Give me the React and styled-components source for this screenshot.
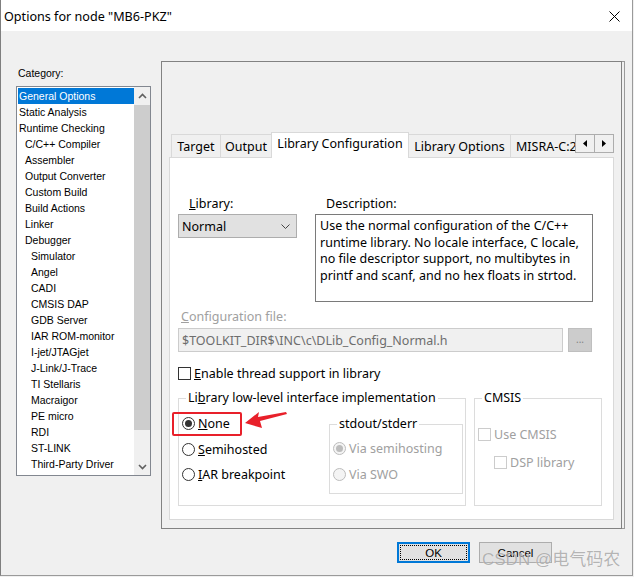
import React from 'react';
import styled, { createGlobalStyle } from 'styled-components';

const Global = createGlobalStyle`
  html, body { margin: 0; padding: 0; background: #f0f0f0; }
  body { width: 634px; height: 577px; overflow: hidden; font-family: "Noto Sans", "Liberation Sans", sans-serif; color: #000; }
  * { box-sizing: border-box; }
`;

const Window = styled.div`
  position: relative;
  width: 633px;
  height: 576px;
  border-left: 1px solid #7f7f7f;
  border-right: 1px solid #9a9a9a;
  border-bottom: 1px solid #9a9a9a;
  background: #f0f0f0;
  display: flex;
  flex-direction: column;
`;

const TitleBar = styled.div`
  height: 31px;
  background: #fff;
  display: flex;
  align-items: center;
  justify-content: space-between;
  padding: 1px 12px 0 3px;
`;

const Title = styled.div`
  font-family: "Noto Sans", sans-serif;
  font-size: 12.6px;
  color: #000;
`;

const Body = styled.div`
  display: flex;
  padding: 30px 0 0 15px;
`;

const LeftCol = styled.div`
  width: 135px;
  padding-top: 4px;
  display: flex;
  flex-direction: column;
`;

const SmallText = styled.div`
  font-family: "Liberation Sans", Arial, sans-serif;
  font-size: 10.5px;
  line-height: 16px;
`;

const CategoryLabel = styled(SmallText)`
  padding-left: 2px;
`;

const ListBox = styled.div`
  margin-top: 5px;
  height: 390px;
  width: 135px;
  border: 1px solid #828790;
  background: #fff;
  display: flex;
`;

const Items = styled.div`
  flex: 1;
  padding: 1px 0 0 1px;
  overflow: hidden;
`;

const Item = styled(SmallText)`
  height: 16px;
  white-space: nowrap;
  padding-left: ${p => 1 + p.$level * 6}px;
  background: ${p => (p.$selected ? '#0078d7' : 'transparent')};
  color: ${p => (p.$selected ? '#fff' : '#000')};
`;

const VScroll = styled.div`
  width: 16px;
  background: #f0f0f0;
  display: flex;
  flex-direction: column;
`;

const ScrollArrow = styled.div`
  height: 17px;
  display: flex;
  align-items: center;
  justify-content: center;
`;

const Thumb = styled.div`
  margin-top: 1px;
  height: 325px;
  background: #cdcdcd;
`;

const Track = styled.div`
  flex: 1;
`;

const Frame = styled.div`
  margin-left: 10px;
  width: 461px;
  height: 468px;
  border: 1px solid #828282;
  box-shadow: 3px 0 0 -1px #f0f0f0, 3px 0 0 0 #9a9a9a;
  padding: 70px 7px 7px 7px;
  display: flex;
  flex-direction: column;
`;

const TabStrip = styled.div`
  height: 26px;
  display: flex;
  padding-left: 2px;
`;

const TabList = styled.div`
  width: 404px;
  height: 26px;
  display: flex;
  align-items: flex-end;
  overflow: hidden;
`;

const Tab = styled.div`
  flex: none;
  width: ${p => p.$w}px;
  height: ${p => (p.$active ? 26 : 24)}px;
  line-height: ${p => (p.$active ? 22 : 23)}px;
  margin-right: -1px;
  border: 1px solid #d9d9d9;
  border-bottom: none;
  background: ${p => (p.$active ? '#fff' : '#f0f0f0')};
  position: ${p => (p.$active ? 'relative' : 'static')};
  z-index: ${p => (p.$active ? 2 : 'auto')};
  font-size: 12.5px;
  text-align: ${p => (p.$clip ? 'left' : 'center')};
  padding-left: ${p => (p.$clip ? 5 : 0)}px;
  white-space: nowrap;
  color: #000;
`;

const TabScroll = styled.div`
  display: flex;
  margin-top: 2px;
  height: 19px;
`;

const ScrollBtn = styled.div`
  width: 20px;
  height: 19px;
  margin-left: ${p => (p.$second ? -1 : 0)}px;
  border: 1px solid #adadad;
  background: #f0f0f0;
  display: flex;
  align-items: center;
  justify-content: center;
`;

const Page = styled.div`
  position: relative;
  z-index: 1;
  margin-top: -1px;
  height: 363px;
  border: 1px solid #d9d9d9;
  background: #fff;
  padding: 38px 0 0 8px;
  display: flex;
  flex-direction: column;
  font-size: 12.5px;
`;

const TopRow = styled.div`
  display: flex;
  gap: 18px;
`;

const FieldCol = styled.div`
  width: ${p => p.$w}px;
  display: flex;
  flex-direction: column;
`;

const FieldLabel = styled.div`
  line-height: 16px;
  padding-left: ${p => p.$indent}px;
  color: ${p => (p.$disabled ? '#a0a0a0' : '#000')};
  white-space: nowrap;
`;

const Select = styled.div`
  margin-top: 2px;
  height: 24px;
  border: 1px solid #adadad;
  background: #e1e1e1;
  display: flex;
  align-items: center;
  justify-content: space-between;
  padding: 0 6px 0 3px;
`;

const DescBox = styled.div`
  margin-top: 2px;
  height: 88px;
  border: 1px solid #7a7a7a;
  padding: 3px 4px 0 4px;
  line-height: 16.7px;
  white-space: nowrap;
`;

const ConfigLabel = styled(FieldLabel)`
  margin-top: 7px;
`;

const ConfigRow = styled.div`
  margin-top: 3px;
  display: flex;
  gap: 5px;
  height: 24px;
`;

const PathInput = styled.div`
  width: 385px;
  border: 1px solid #cccccc;
  background: #f0f0f0;
  color: #6d6d6d;
  display: flex;
  align-items: center;
  padding-left: 3px;
  white-space: nowrap;
`;

const BrowseBtn = styled.div`
  width: 24px;
  border: 1px solid #bfbfbf;
  background: #cccccc;
  color: #838383;
  font-size: 10px;
  display: flex;
  align-items: center;
  justify-content: center;
  padding-bottom: 2px;
`;

const CheckRow = styled.div`
  display: flex;
  align-items: center;
  height: ${p => p.$h || 16}px;
  margin-top: ${p => p.$mt || 0}px;
  margin-left: ${p => p.$ml || 0}px;
  color: ${p => (p.$disabled ? '#a0a0a0' : '#000')};
  white-space: nowrap;
`;

const CheckBox = styled.span`
  width: 13px;
  height: 13px;
  flex: none;
  border: 1px solid ${p => (p.$disabled ? '#cccccc' : '#333')};
  background: #fff;
  margin-right: 3px;
`;

const Radio = styled.span`
  width: 13px;
  height: 13px;
  flex: none;
  border-radius: 50%;
  border: 1px solid ${p => (p.$disabled ? '#bcbcbc' : '#333')};
  background: ${p => (p.$disabled ? '#f4f4f4' : '#fff')};
  margin-right: 3px;
  display: flex;
  align-items: center;
  justify-content: center;
  &::after {
    content: '';
    display: ${p => (p.$checked ? 'block' : 'none')};
    width: 7px;
    height: 7px;
    border-radius: 50%;
    background: ${p => (p.$disabled ? '#bcbcbc' : '#333')};
  }
`;

const GroupsRow = styled.div`
  margin-top: 9px;
  display: flex;
  gap: 8px;
`;

const Group = styled.fieldset`
  margin: 0;
  padding: 0;
  min-width: 0;
  width: ${p => p.$w}px;
  height: ${p => p.$h}px;
  border: 1px solid #dcdcdc;
  margin-top: ${p => p.$mt || 0}px;
  display: flex;
  flex-direction: ${p => p.$dir || 'column'};
`;

const Legend = styled.legend`
  margin-left: 7px;
  padding: 0 2px;
  line-height: 16px;
  color: ${p => (p.$disabled ? '#a0a0a0' : '#000')};
`;

const RadioCol = styled.div`
  width: 150px;
  padding: 5px 0 0 3px;
  display: flex;
  flex-direction: column;
  flex: none;
`;

const SubCol = styled.div`
  padding: 4px 0 0 3px;
  display: flex;
  flex-direction: column;
`;

const CmsisCol = styled.div`
  padding: 18px 0 0 3px;
  display: flex;
  flex-direction: column;
`;

const Footer = styled.div`
  display: flex;
  justify-content: flex-end;
  gap: 9px;
  padding-right: 80px;
  margin-top: 13px;
`;

const Button = styled.div`
  width: 73px;
  height: 21px;
  background: #e1e1e1;
  border: ${p => (p.$default ? '2px solid #0078d7' : '1px solid #adadad')};
  font-family: "Liberation Sans", Arial, sans-serif;
  font-size: 11.5px;
  display: flex;
  align-items: center;
  justify-content: center;
  position: relative;
  &::after {
    content: '';
    display: ${p => (p.$default ? 'block' : 'none')};
    position: absolute;
    inset: 1px;
    border: 1px dotted #000;
  }
`;

const RedBox = styled.div`
  position: absolute;
  z-index: 5;
  left: 171px;
  top: 412px;
  width: 70px;
  height: 24px;
  border: 2px solid #e8202a;
  border-radius: 2px;
`;

const Arrow = styled.svg`
  position: absolute;
  z-index: 5;
  left: 243px;
  top: 408px;
`;

const Watermark = styled.div`
  position: absolute;
  z-index: 5;
  left: 481px;
  top: 545px;
  font-family: "Liberation Sans", "Noto Sans CJK SC", sans-serif;
  font-size: 17px;
  color: rgba(120, 120, 120, 0.55);
  text-shadow: 0 0 1px rgba(255, 255, 255, 0.8);
  white-space: nowrap;
`;

const items = [
  ['General Options', 0, true], ['Static Analysis', 0], ['Runtime Checking', 0],
  ['C/C++ Compiler', 1], ['Assembler', 1], ['Output Converter', 1], ['Custom Build', 1],
  ['Build Actions', 1], ['Linker', 1], ['Debugger', 1], ['Simulator', 2], ['Angel', 2],
  ['CADI', 2], ['CMSIS DAP', 2], ['GDB Server', 2], ['IAR ROM-monitor', 2],
  ['I-jet/JTAGjet', 2], ['J-Link/J-Trace', 2], ['TI Stellaris', 2], ['Macraigor', 2],
  ['PE micro', 2], ['RDI', 2], ['ST-LINK', 2], ['Third-Party Driver', 2],
];

const Chevron = ({ up }) => (
  <svg width="9" height="6" viewBox="0 0 9 6">
    <polyline points={up ? '1,5 4.5,1.5 8,5' : '1,1 4.5,4.5 8,1'} fill="none" stroke="#606060" strokeWidth="1.6" />
  </svg>
);

export default function App() {
  return (
    <>
      <Global />
      <Window>
        <TitleBar>
          <Title>Options for node "MB6-PKZ"</Title>
          <svg width="11" height="11" viewBox="0 0 11 11">
            <path d="M0.5 0.5 L10.5 10.5 M10.5 0.5 L0.5 10.5" stroke="#000" strokeWidth="1" />
          </svg>
        </TitleBar>
        <Body>
          <LeftCol>
            <CategoryLabel>Category:</CategoryLabel>
            <ListBox>
              <Items>
                {items.map(([t, lvl, sel]) => (
                  <Item key={t} $level={lvl} $selected={sel}>{t}</Item>
                ))}
              </Items>
              <VScroll>
                <ScrollArrow><Chevron up /></ScrollArrow>
                <Thumb />
                <Track />
                <ScrollArrow><Chevron /></ScrollArrow>
              </VScroll>
            </ListBox>
          </LeftCol>
          <Frame>
            <TabStrip>
              <TabList>
                <Tab $w={50}>Target</Tab>
                <Tab $w={52}>Output</Tab>
                <Tab $w={138} $active>Library Configuration</Tab>
                <Tab $w={103}>Library Options</Tab>
                <Tab $w={90} $clip>MISRA-C:2004</Tab>
              </TabList>
              <TabScroll>
                <ScrollBtn>
                  <svg width="4" height="7" viewBox="0 0 4 7"><polygon points="4,0 0,3.5 4,7" fill="#000" /></svg>
                </ScrollBtn>
                <ScrollBtn $second>
                  <svg width="4" height="7" viewBox="0 0 4 7"><polygon points="0,0 4,3.5 0,7" fill="#000" /></svg>
                </ScrollBtn>
              </TabScroll>
            </TabStrip>
            <Page>
              <TopRow>
                <FieldCol $w={119}>
                  <FieldLabel $indent={11}><u>L</u>ibrary:</FieldLabel>
                  <Select>
                    <span>Normal</span>
                    <svg width="9" height="5" viewBox="0 0 9 5">
                      <polyline points="0.5,0.5 4.5,4.5 8.5,0.5" fill="none" stroke="#444" strokeWidth="1" />
                    </svg>
                  </Select>
                </FieldCol>
                <FieldCol $w={278}>
                  <FieldLabel $indent={11}>Description:</FieldLabel>
                  <DescBox>
                    Use the normal configuration of the C/C++<br />
                    runtime library. No locale interface, C locale,<br />
                    no file descriptor support, no multibytes in<br />
                    printf and scanf, and no hex floats in strtod.
                  </DescBox>
                </FieldCol>
              </TopRow>
              <ConfigLabel $indent={3} $disabled><u>C</u>onfiguration file:</ConfigLabel>
              <ConfigRow>
                <PathInput>$TOOLKIT_DIR$\INC\c\DLib_Config_Normal.h</PathInput>
                <BrowseBtn>...</BrowseBtn>
              </ConfigRow>
              <CheckRow $mt={13}>
                <CheckBox />
                <span><u>E</u>nable thread support in library</span>
              </CheckRow>
              <GroupsRow>
                <Group $w={288} $h={116} $dir="row">
                  <Legend>Li<u>b</u>rary low-level interface implementation</Legend>
                  <RadioCol>
                    <CheckRow $h={25.5}><Radio $checked /><span><u>N</u>one</span></CheckRow>
                    <CheckRow $h={25.5}><Radio /><span><u>S</u>emihosted</span></CheckRow>
                    <CheckRow $h={25.5}><Radio /><span><u>I</u>AR breakpoint</span></CheckRow>
                  </RadioCol>
                  <Group $w={134} $h={78} $mt={10}>
                    <Legend>stdout/stderr</Legend>
                    <SubCol>
                      <CheckRow $h={25.5} $disabled><Radio $checked $disabled /><span>Via semihosting</span></CheckRow>
                      <CheckRow $h={25.5} $disabled><Radio $disabled /><span>Via SWO</span></CheckRow>
                    </SubCol>
                  </Group>
                </Group>
                <Group $w={128} $h={116}>
                  <Legend>CMSIS</Legend>
                  <CmsisCol>
                    <CheckRow $h={20} $disabled><CheckBox $disabled /><span>Use CMSIS</span></CheckRow>
                    <CheckRow $h={20} $mt={8} $ml={16} $disabled><CheckBox $disabled /><span>DSP library</span></CheckRow>
                  </CmsisCol>
                </Group>
              </GroupsRow>
            </Page>
          </Frame>
        </Body>
        <Footer>
          <Button $default>OK</Button>
          <Button>Cancel</Button>
        </Footer>
        <RedBox />
        <Arrow width="44" height="22" viewBox="0 0 44 22">
          <polygon points="1,15 15,4 14,9 42,4 43,6 16,13 18,20" fill="#e8202a" />
        </Arrow>
        <Watermark>CSDN @电气码农</Watermark>
      </Window>
    </>
  );
}
